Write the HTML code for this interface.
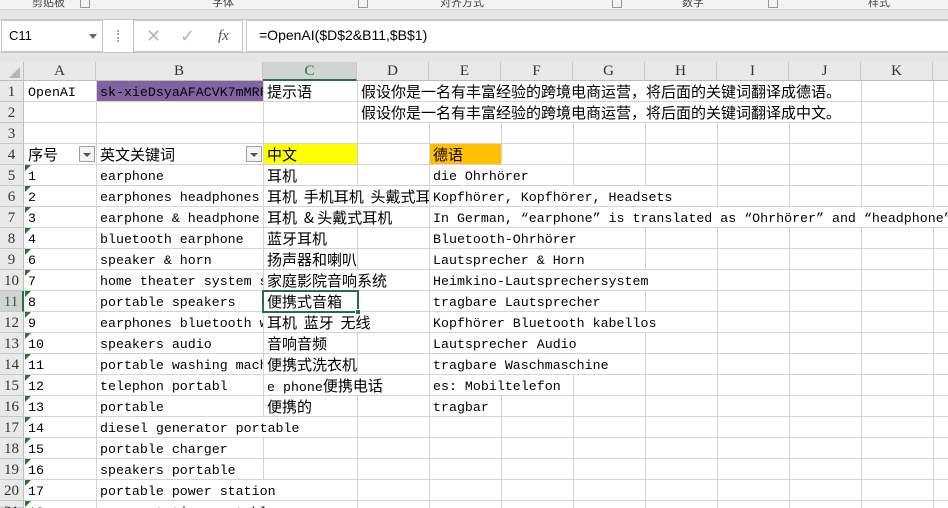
<!DOCTYPE html>
<html style="width:948px;height:508px;overflow:hidden"><head><meta charset="utf-8"><style>
*{margin:0;padding:0;box-sizing:border-box}
body{width:948px;height:508px;overflow:hidden;background:#fff;position:relative;font-family:"Liberation Mono","Noto Sans CJK SC",monospace;font-size:13.3px;color:#000}
.a{position:absolute}
.rib{left:0;top:0;width:948px;height:10px;background:#f3f3f3;border-bottom:1px solid #d6d6d6;font-family:"Noto Sans CJK SC",sans-serif;font-size:11px;line-height:4px;color:#444;overflow:hidden}
.hline{left:0;width:948px;height:1px;background:#d4d4d4}
.vline{top:62px;width:1px;height:446px;background:#d4d4d4}
.t{position:absolute;height:20px;line-height:23px;white-space:nowrap;overflow:hidden;background:#fff;padding-left:3px}
.c{font-family:"Noto Sans CJK SC",sans-serif;font-size:15px;line-height:22px}
.rh{position:absolute;left:0;width:24px;height:21px;background:#e9e9e9;border-bottom:1px solid #c8c8c8;border-right:1px solid #bdbdbd;text-align:center;line-height:22px;font-family:"Liberation Serif",serif;font-size:15px;color:#333}
.ch{position:absolute;top:62px;height:19px;background:#e9e9e9;border-right:1px solid #c8c8c8;border-bottom:1px solid #bdbdbd;text-align:center;line-height:19px;font-family:"Liberation Serif",serif;font-size:15px;color:#333}
.tri{position:absolute;left:25px;width:0;height:0;border-top:6px solid #207a2a;border-right:6px solid transparent}
.flt{position:absolute;width:16px;height:16px;border:1px solid #a0a0a0;background:#f4f4f4}
.flt:after{content:"";position:absolute;left:3px;top:6px;border-top:4px solid #555;border-left:4px solid transparent;border-right:4px solid transparent}
</style></head><body>
<div class="a rib"><span class="a" style="left:32px;top:0">剪贴板</span><span class="a" style="left:80px;top:0;width:10px;height:8px;border:1px solid #999;border-top:none"></span><span class="a" style="left:212px;top:0">字体</span><span class="a" style="left:358px;top:0;width:10px;height:8px;border:1px solid #999;border-top:none"></span><span class="a" style="left:440px;top:0">对齐方式</span><span class="a" style="left:612px;top:0;width:10px;height:8px;border:1px solid #999;border-top:none"></span><span class="a" style="left:682px;top:0">数字</span><span class="a" style="left:768px;top:0;width:10px;height:8px;border:1px solid #999;border-top:none"></span><span class="a" style="left:868px;top:0">样式</span></div>
<div class="a" style="left:0;top:10px;width:948px;height:10px;background:#e6e6e6;border-bottom:1px solid #c6c6c6"></div>
<div class="a" style="left:0;top:20px;width:948px;height:32px;background:#fff"></div>
<div class="a" style="left:1px;top:20px;width:102px;height:32px;border:1px solid #c6c6c6;font-family:'Liberation Sans',sans-serif;font-size:13px;line-height:30px;padding-left:7px">C11<span class="a" style="left:87px;top:13px;border-top:5px solid #666;border-left:4px solid transparent;border-right:4px solid transparent"></span></div>
<div class="a" style="left:117px;top:30px;width:2px;height:12px;border-left:2px dotted #aaa"></div>
<div class="a" style="left:133px;top:20px;width:110px;height:32px;border:1px solid #c6c6c6;color:#b8b8b8;font-family:'Liberation Sans',sans-serif;font-size:18px;line-height:30px"><span class="a" style="left:12px">✕</span><span class="a" style="left:46px">✓</span><span class="a" style="left:84px;font-family:'Liberation Serif',serif;font-style:italic;font-size:15px;color:#555">fx</span></div>
<div class="a" style="left:246px;top:20px;width:702px;height:32px;border:1px solid #c6c6c6;border-right:none;font-family:'Liberation Sans',sans-serif;font-size:14px;line-height:28px;padding-left:12px">=OpenAI($D$2&amp;B11,$B$1)</div>
<div class="a" style="left:0;top:52px;width:948px;height:10px;background:#e6e6e6;border-top:1px solid #c6c6c6"></div>

<div class="a vline" style="left:96px"></div><div class="a vline" style="left:263px"></div><div class="a vline" style="left:357px"></div><div class="a vline" style="left:429px"></div><div class="a vline" style="left:501px"></div><div class="a vline" style="left:573px"></div><div class="a vline" style="left:645px"></div><div class="a vline" style="left:717px"></div><div class="a vline" style="left:789px"></div><div class="a vline" style="left:861px"></div><div class="a vline" style="left:933px"></div>
<div class="a hline" style="top:101px"></div><div class="a hline" style="top:122px"></div><div class="a hline" style="top:143px"></div><div class="a hline" style="top:164px"></div><div class="a hline" style="top:185px"></div><div class="a hline" style="top:206px"></div><div class="a hline" style="top:227px"></div><div class="a hline" style="top:248px"></div><div class="a hline" style="top:269px"></div><div class="a hline" style="top:290px"></div><div class="a hline" style="top:311px"></div><div class="a hline" style="top:332px"></div><div class="a hline" style="top:353px"></div><div class="a hline" style="top:374px"></div><div class="a hline" style="top:395px"></div><div class="a hline" style="top:416px"></div><div class="a hline" style="top:437px"></div><div class="a hline" style="top:458px"></div><div class="a hline" style="top:479px"></div><div class="a hline" style="top:500px"></div>

<div class="a" style="left:0;top:62px;width:24px;height:19px;background:#e9e9e9;border-right:1px solid #bdbdbd;border-bottom:1px solid #bdbdbd"><span class="a" style="left:9px;top:5px;border-bottom:11px solid #b5b5b5;border-left:11px solid transparent"></span></div>
<div class="ch" style="left:24px;width:72px">A</div><div class="ch" style="left:96px;width:167px">B</div><div class="ch" style="left:263px;width:94px;background:#d3d3d3;border-bottom:2px solid #217346;color:#217346">C</div><div class="ch" style="left:357px;width:72px">D</div><div class="ch" style="left:429px;width:72px">E</div><div class="ch" style="left:501px;width:72px">F</div><div class="ch" style="left:573px;width:72px">G</div><div class="ch" style="left:645px;width:72px">H</div><div class="ch" style="left:717px;width:72px">I</div><div class="ch" style="left:789px;width:72px">J</div><div class="ch" style="left:861px;width:72px">K</div><div class="ch" style="left:933px;width:15px;border-right:none"></div>

<div class="rh" style="top:81px">1</div><div class="rh" style="top:102px">2</div><div class="rh" style="top:123px">3</div><div class="rh" style="top:144px">4</div><div class="rh" style="top:165px">5</div><div class="rh" style="top:186px">6</div><div class="rh" style="top:207px">7</div><div class="rh" style="top:228px">8</div><div class="rh" style="top:249px">9</div><div class="rh" style="top:270px">10</div><div class="rh" style="top:291px;background:#d3d3d3;border-right:2px solid #217346;color:#217346">11</div><div class="rh" style="top:312px">12</div><div class="rh" style="top:333px">13</div><div class="rh" style="top:354px">14</div><div class="rh" style="top:375px">15</div><div class="rh" style="top:396px">16</div><div class="rh" style="top:417px">17</div><div class="rh" style="top:438px">18</div><div class="rh" style="top:459px">19</div><div class="rh" style="top:480px">20</div><div class="rh" style="top:501px;height:7px">21</div>

<div class="t" style="left:25px;top:81px">OpenAI</div>
<div class="t" style="left:97px;top:81px;width:166px;background:#8064a2">sk-xieDsyaAFACVK7mMRF</div>
<div class="t c" style="left:264px;top:81px">提示语</div>
<div class="t c" style="left:358px;top:81px">假设你是一名有丰富经验的跨境电商运营，将后面的关键词翻译成德语。</div>
<div class="t c" style="left:358px;top:102px">假设你是一名有丰富经验的跨境电商运营，将后面的关键词翻译成中文。</div>
<div class="t c" style="left:25px;top:144px">序号</div><div class="flt" style="left:79px;top:146px"></div>
<div class="t c" style="left:97px;top:144px">英文关键词</div><div class="flt" style="left:246px;top:146px"></div>
<div class="t c" style="left:264px;top:144px;width:93px;background:#ffff00">中文</div>
<div class="t c" style="left:430px;top:144px;width:71px;background:#ffc000">德语</div>

<div class="t" style="left:25px;top:165px">1</div><div class="t" style="left:97px;top:165px">earphone</div><div class="t c" style="left:264px;top:165px">耳机</div><div class="t" style="left:430px;top:165px">die Ohrhörer</div>
<div class="t" style="left:25px;top:186px">2</div><div class="t" style="left:97px;top:186px;width:166px">earphones headphones</div><div class="t c" style="left:264px;top:186px;width:165px">耳机&nbsp;&nbsp;手机耳机&nbsp;&nbsp;头戴式耳机</div><div class="t" style="left:430px;top:186px">Kopfhörer, Kopfhörer, Headsets</div>
<div class="t" style="left:25px;top:207px">3</div><div class="t" style="left:97px;top:207px;width:166px">earphone &amp; headphone</div><div class="t c" style="left:264px;top:207px">耳机&nbsp;&nbsp;&amp;&nbsp;头戴式耳机</div><div class="t" style="left:430px;top:207px">In German, “earphone” is translated as “Ohrhörer” and “headphone”</div>
<div class="t" style="left:25px;top:228px">4</div><div class="t" style="left:97px;top:228px">bluetooth earphone</div><div class="t c" style="left:264px;top:228px">蓝牙耳机</div><div class="t" style="left:430px;top:228px">Bluetooth-Ohrhörer</div>
<div class="t" style="left:25px;top:249px">6</div><div class="t" style="left:97px;top:249px">speaker &amp; horn</div><div class="t c" style="left:264px;top:249px">扬声器和喇叭</div><div class="t" style="left:430px;top:249px">Lautsprecher &amp; Horn</div>
<div class="t" style="left:25px;top:270px">7</div><div class="t" style="left:97px;top:270px;width:166px">home theater system speakers</div><div class="t c" style="left:264px;top:270px">家庭影院音响系统</div><div class="t" style="left:430px;top:270px">Heimkino-Lautsprechersystem</div>
<div class="t" style="left:25px;top:291px">8</div><div class="t" style="left:97px;top:291px">portable speakers</div><div class="t c" style="left:264px;top:291px">便携式音箱</div><div class="t" style="left:430px;top:291px">tragbare Lautsprecher</div>
<div class="t" style="left:25px;top:312px">9</div><div class="t" style="left:97px;top:312px;width:166px">earphones bluetooth wireless</div><div class="t c" style="left:264px;top:312px">耳机&nbsp;&nbsp;蓝牙&nbsp;&nbsp;无线</div><div class="t" style="left:430px;top:312px">Kopfhörer Bluetooth kabellos</div>
<div class="t" style="left:25px;top:333px">10</div><div class="t" style="left:97px;top:333px">speakers audio</div><div class="t c" style="left:264px;top:333px">音响音频</div><div class="t" style="left:430px;top:333px">Lautsprecher Audio</div>
<div class="t" style="left:25px;top:354px">11</div><div class="t" style="left:97px;top:354px;width:166px">portable washing machine</div><div class="t c" style="left:264px;top:354px">便携式洗衣机</div><div class="t" style="left:430px;top:354px">tragbare Waschmaschine</div>
<div class="t" style="left:25px;top:375px">12</div><div class="t" style="left:97px;top:375px">telephon portabl</div><div class="t c" style="left:264px;top:375px"><span style="font-family:'Liberation Mono',monospace;font-size:13.3px">e phone</span>便携电话</div><div class="t" style="left:430px;top:375px">es: Mobiltelefon</div>
<div class="t" style="left:25px;top:396px">13</div><div class="t" style="left:97px;top:396px">portable</div><div class="t c" style="left:264px;top:396px">便携的</div><div class="t" style="left:430px;top:396px">tragbar</div>
<div class="t" style="left:25px;top:417px">14</div><div class="t" style="left:97px;top:417px">diesel generator portable</div>
<div class="t" style="left:25px;top:438px">15</div><div class="t" style="left:97px;top:438px">portable charger</div>
<div class="t" style="left:25px;top:459px">16</div><div class="t" style="left:97px;top:459px">speakers portable</div>
<div class="t" style="left:25px;top:480px">17</div><div class="t" style="left:97px;top:480px">portable power station</div>
<div class="t" style="left:25px;top:501px;height:7px">18</div><div class="t" style="left:97px;top:501px;height:7px">power station portable</div>

<div class="tri" style="top:165px"></div><div class="tri" style="top:186px"></div><div class="tri" style="top:207px"></div><div class="tri" style="top:228px"></div><div class="tri" style="top:249px"></div><div class="tri" style="top:270px"></div><div class="tri" style="top:291px"></div><div class="tri" style="top:312px"></div><div class="tri" style="top:333px"></div><div class="tri" style="top:354px"></div><div class="tri" style="top:375px"></div><div class="tri" style="top:396px"></div><div class="tri" style="top:417px"></div><div class="tri" style="top:438px"></div><div class="tri" style="top:459px"></div><div class="tri" style="top:480px"></div><div class="tri" style="top:501px"></div>

<div class="a" style="left:262px;top:290px;width:97px;height:23px;border:2px solid #217346"></div>
<div class="a" style="left:355px;top:309px;width:6px;height:6px;background:#217346;border:1px solid #fff"></div>
</body></html>
